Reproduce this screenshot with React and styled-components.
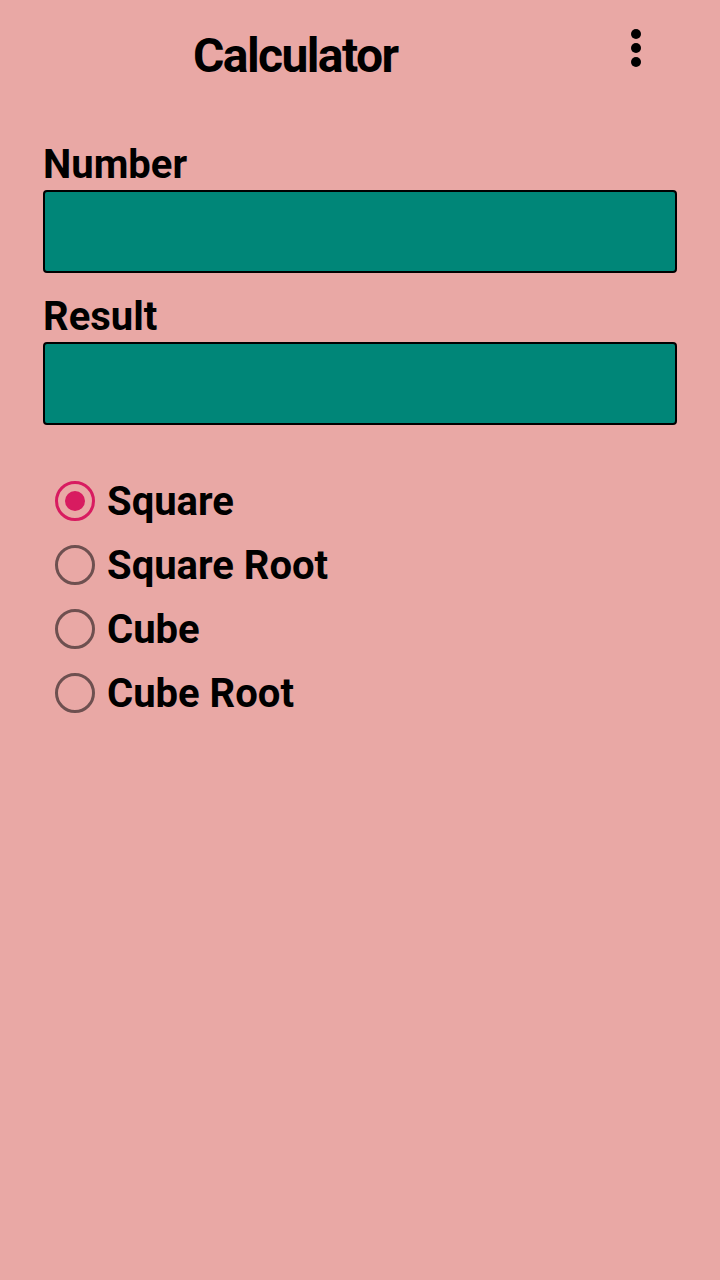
import React, { useState } from 'react';
import styled, { createGlobalStyle } from 'styled-components';

const GlobalStyle = createGlobalStyle`
  html, body {
    margin: 0;
    padding: 0;
    background: #e9a8a5;
    font-family: Roboto, "Liberation Sans", sans-serif;
  }
`;

const options = ['Square', 'Square Root', 'Cube', 'Cube Root'];

function App() {
  const [choice, setChoice] = useState('Square');

  return (
    <Screen>
      <GlobalStyle />
      <Header>
        <Title>Calculator</Title>
        <MenuButton aria-label="More options">
          <svg width="12" height="40" viewBox="0 0 12 40">
            <circle cx="6" cy="6" r="5" fill="#000" />
            <circle cx="6" cy="20" r="5" fill="#000" />
            <circle cx="6" cy="34" r="5" fill="#000" />
          </svg>
        </MenuButton>
      </Header>

      <Form>
        <Field>
          <Label>Number</Label>
          <Input />
        </Field>
        <Field>
          <Label>Result</Label>
          <Input readOnly />
        </Field>

        <RadioGroup>
          {options.map((opt) => (
            <RadioRow key={opt} onClick={() => setChoice(opt)}>
              <RadioCircle checked={choice === opt} />
              <RadioText>{opt}</RadioText>
            </RadioRow>
          ))}
        </RadioGroup>
      </Form>
    </Screen>
  );
}

const Screen = styled.div`
  width: 720px;
  height: 1280px;
  background: #e9a8a5;
  display: flex;
  flex-direction: column;
`;

const Header = styled.header`
  height: 112px;
  display: grid;
  grid-template-columns: 1fr auto;
  align-items: start;
  padding: 0 78px 0 0;
  box-sizing: border-box;
`;

const Title = styled.h1`
  margin: 28px 0 0 193px;
  font-size: 48px;
  font-weight: 700;
  letter-spacing: -1.6px;
  line-height: 56px;
  color: #000;
`;

const MenuButton = styled.button`
  margin-top: 28px;
  border: 0;
  padding: 0;
  background: transparent;
  display: flex;
`;

const Form = styled.div`
  display: flex;
  flex-direction: column;
  padding: 30px 43px 0 43px;
`;

const Field = styled.div`
  display: flex;
  flex-direction: column;
  margin-bottom: 21px;
`;

const Label = styled.label`
  font-size: 40px;
  font-weight: 700;
  line-height: 46px;
  color: #000;
  margin-bottom: 2px;
`;

const Input = styled.input`
  height: 83px;
  box-sizing: border-box;
  border: 2px solid #000;
  border-radius: 4px;
  background: #008678;
  outline: none;
`;

const RadioGroup = styled.div`
  display: flex;
  flex-direction: column;
  margin-top: 23px;
  padding-left: 12px;
`;

const RadioRow = styled.div`
  height: 64px;
  display: flex;
  align-items: center;
  gap: 12px;
  cursor: pointer;
`;

const RadioCircle = styled.span`
  width: 40px;
  height: 40px;
  box-sizing: border-box;
  border-radius: 50%;
  border: 3.5px solid ${(p) => (p.checked ? '#d81b60' : '#6e5050')};
  display: flex;
  align-items: center;
  justify-content: center;

  &::after {
    content: '';
    width: 20px;
    height: 20px;
    border-radius: 50%;
    background: #d81b60;
    display: ${(p) => (p.checked ? 'block' : 'none')};
  }
`;

const RadioText = styled.span`
  font-size: 40px;
  font-weight: 700;
  color: #000;
`;

export default App;
